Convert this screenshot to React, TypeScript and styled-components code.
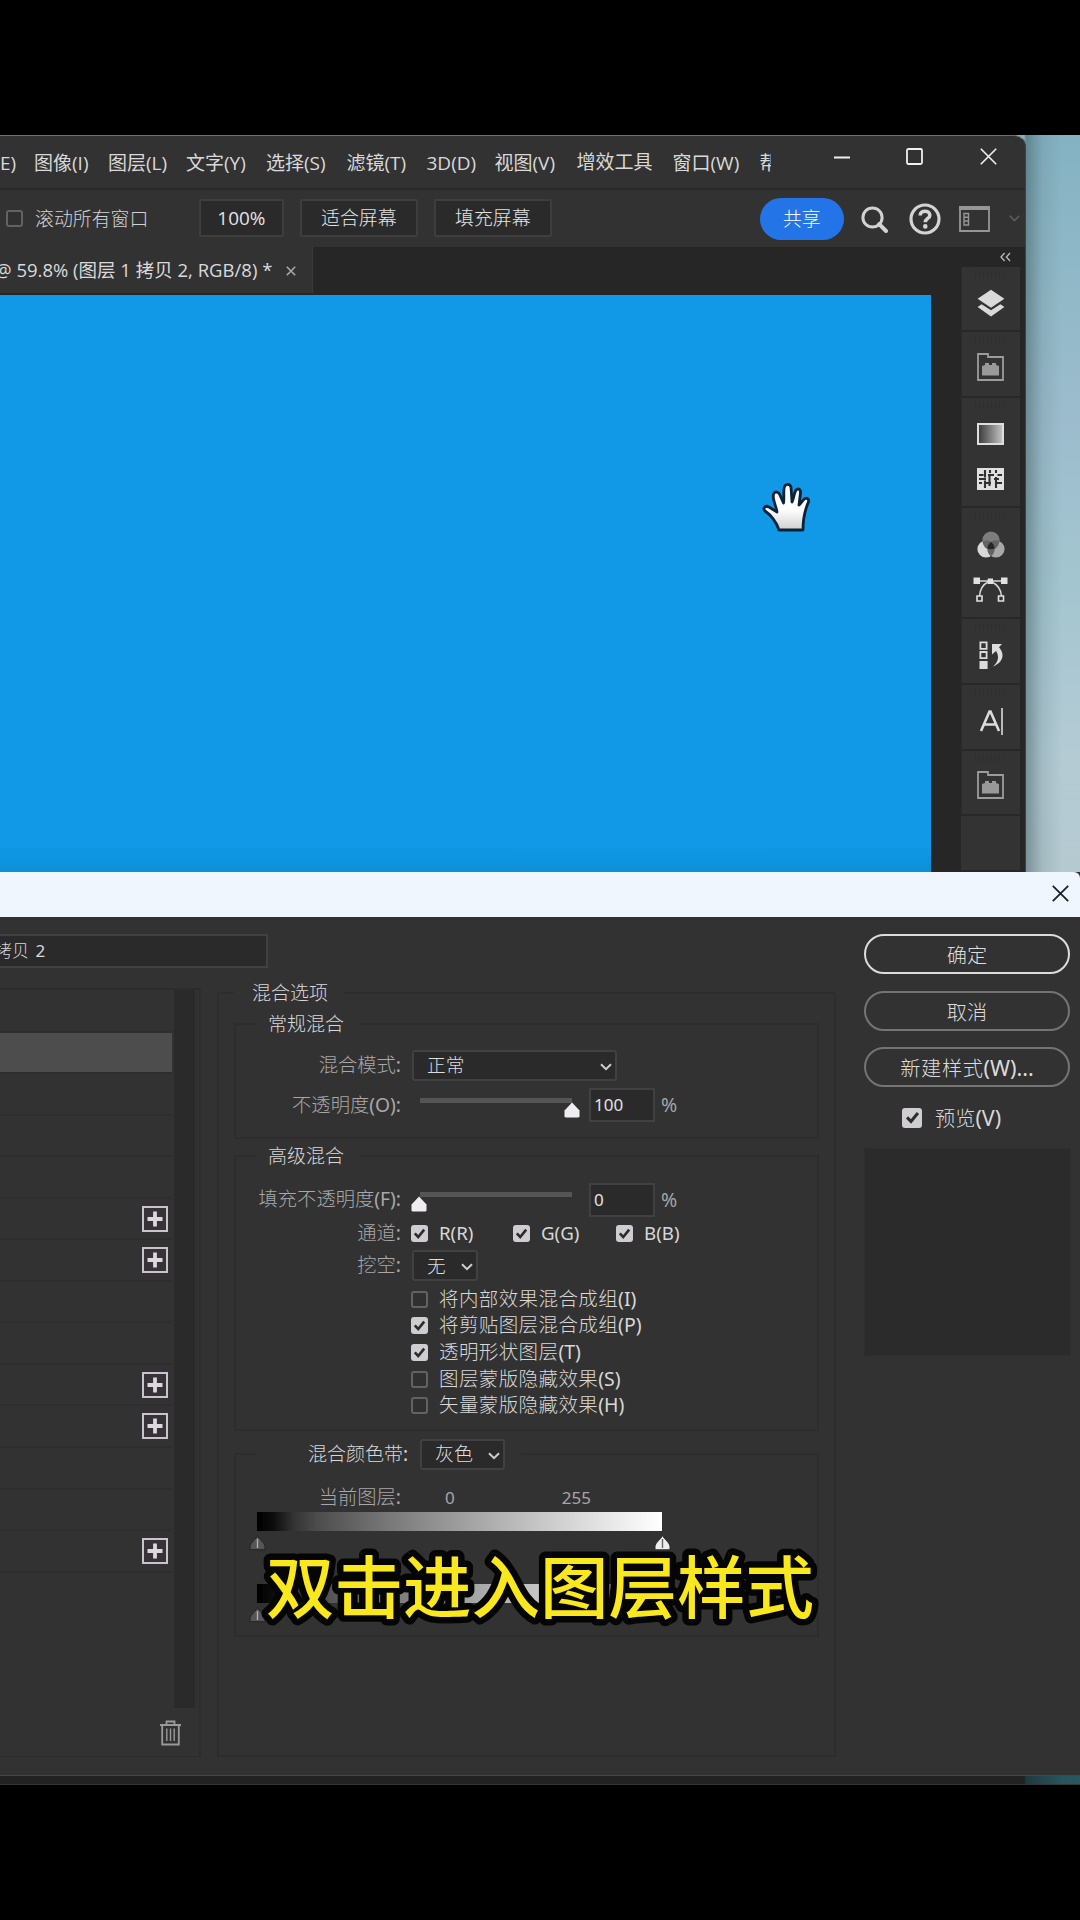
import React from "react";
import styled, { createGlobalStyle } from "styled-components";

const Global = createGlobalStyle`
  * { box-sizing: border-box; }
  html, body { margin: 0; padding: 0; background: #000; }
  body { width: 1080px; height: 1920px; overflow: hidden; }
  button, input { font: inherit; }
`;

const UI = `"Open Sans", "Noto Sans CJK SC", sans-serif`;
const FORM = `"Noto Sans", "Noto Sans CJK SC", sans-serif`;

const Screen = styled.main`
  position: relative;
  display: flex;
  flex-direction: column;
  width: 1080px;
  height: 1920px;
  padding: 135px 0;
  background: #000;
  overflow: hidden;
`;

/* ---------- application window ---------- */

const Desktop = styled.section`
  display: flex;
  height: 737px;
  flex: none;
  background:
    linear-gradient(90deg, transparent 1024px, rgba(62, 88, 94, 0.5) 1026px, rgba(90, 120, 128, 0.2) 1042px, transparent 1062px),
    linear-gradient(180deg, #84b2c2 0%, #92b9c8 22%, #9cbccd 38%, #a3c5cf 60%, #b4cbd4 85%, #b5c9d0 100%);
`;

const AppWindow = styled.div`
  display: flex;
  flex-direction: column;
  width: 1026px;
  border-top: 1px solid #6e6e6e;
  border-right: 1px solid #3f4344;
  border-radius: 0 12px 0 0;
  background: #323232;
  overflow: hidden;
`;

const MenuBar = styled.nav`
  display: flex;
  align-items: center;
  height: 54px;
  flex: none;
  border-bottom: 2px solid #292929;
  font: 400 19px/28px ${UI};
  color: #d9d9d9;
  white-space: nowrap;
`;

const MenuItem = styled.span<{ $w: number; $up?: boolean }>`
  width: ${(p) => p.$w}px;
  flex: none;
  padding: ${(p) => (p.$up ? "0 0 1px" : "2px 0 0")};
`;

const ClippedItem = styled(MenuItem)`
  overflow: hidden;
`;

const WindowButtons = styled.div`
  display: flex;
  align-items: center;
  gap: 56.5px;
  margin: 0 0 11px 63px;
`;

const OptionsBar = styled.div`
  display: flex;
  align-items: center;
  height: 57px;
  flex: none;
  margin-right: 5px;
  padding-left: 6px;
  font: 300 18.9px/26px ${UI};
  color: #d2d2d2;
  white-space: nowrap;
`;

const ToolButton = styled.button<{ $w: number; $ml: number }>`
  width: ${(p) => p.$w}px;
  height: 38px;
  margin: -1px 0 0 ${(p) => p.$ml}px;
  padding: 0;
  border: 2px solid #3e3e3e;
  border-radius: 2px;
  background: #2a2a2a;
  color: #e4e4e4;
  white-space: nowrap;
`;

const ShareButton = styled.button`
  width: 84px;
  height: 42px;
  margin: 0 17px 0 208px;
  padding: 0;
  border: 0;
  border-radius: 21px;
  background: #2375e7;
  color: #fff;
`;

const IconSlot = styled.span<{ $ml?: number; $mt?: number }>`
  display: flex;
  flex: none;
  margin-left: ${(p) => p.$ml ?? 0}px;
  margin-top: ${(p) => p.$mt ?? 0}px;
`;

const Workspace = styled.div`
  display: flex;
  flex: 1;
  min-height: 0;
  background: #262626;
`;

const DocumentArea = styled.div`
  display: flex;
  flex-direction: column;
  width: 961px;
`;

const DocumentTab = styled.div`
  display: flex;
  align-items: center;
  width: 313px;
  height: 46px;
  margin-bottom: 2px;
  flex: none;
  border-right: 1px solid #3a3a3a;
  background: #323232;
  font: 400 18.5px/26px ${UI};
  color: #dadada;
  white-space: nowrap;
`;

const TabTitle = styled.span`
  width: 281px;
  margin-left: -5px;
`;

const Canvas = styled.div`
  width: 930.5px;
  flex: 1;
  background: linear-gradient(180deg, #1199e7 0%, #1199e7 95%, #0e90d8 100%);
`;

const Dock = styled.aside`
  display: flex;
  flex-direction: column;
  width: 59px;
`;

const DockHeader = styled.div`
  display: flex;
  justify-content: flex-end;
  height: 20px;
  flex: none;
  padding: 5px 9px 0 0;
`;

const DockGroup = styled.div<{ $h: number }>`
  display: flex;
  flex-direction: column;
  align-items: center;
  height: ${(p) => p.$h}px;
  flex: none;
  padding-right: 1px;
  border-left: 1px solid #2b2b2b;
  border-bottom: 2px solid #282828;
  background: #333;
`;

const Grip = styled.i`
  width: 32px;
  height: 7px;
  margin: 4px 0 4px;
  flex: none;
  background: repeating-linear-gradient(90deg, #2f2f2f 0 1px, transparent 1px 4px);
`;

const DockIcon = styled.span<{ $h: number }>`
  display: flex;
  align-items: center;
  justify-content: center;
  width: 40px;
  height: ${(p) => p.$h}px;
`;

const DockTail = styled.div`
  flex: 1;
  margin-bottom: 2px;
  background: #333;
`;

/* ---------- layer style dialog ---------- */

const Dialog = styled.section`
  display: flex;
  flex-direction: column;
  height: 904px;
  flex: none;
  background: #323232;
  border-bottom: 1px solid #454545;
  font: 300 18.7px/24px ${FORM};
  color: #d8d8d8;
`;

const Latin = styled.span`
  font-weight: 400;
  letter-spacing: 0;
`;

const TitleBar = styled.header`
  display: flex;
  justify-content: flex-end;
  height: 45px;
  flex: none;
  padding: 13px 11px 0 0;
  border-radius: 0 6px 0 0;
  background: #eff6fd;
`;

const DialogBody = styled.div`
  display: flex;
  flex: 1;
`;

const MainColumn = styled.div`
  width: 864px;
`;

const NameField = styled.div`
  display: flex;
  align-items: center;
  width: 268px;
  height: 34px;
  margin: 17px 0 20px;
  border: 2px solid #414141;
  border-left: 0;
  background: #2a2a2a;
  font-size: 17px;
  white-space: nowrap;
  overflow: hidden;
`;

const NameText = styled.span`
  margin-left: -5px;
  word-spacing: 2px;
`;

const Panels = styled.div`
  display: flex;
`;

const StylePane = styled.div`
  display: flex;
  flex-direction: column;
  width: 201px;
  height: 769px;
  margin-right: 16px;
  border-right: 2px solid #2d2d2d;
  border-bottom: 1px solid #2d2d2d;
`;

const StyleListFrame = styled.div`
  display: flex;
  height: 720px;
  border-top: 2px solid #2c2c2c;
`;

const StyleList = styled.ul`
  width: 172px;
  margin: 0;
  padding: 1px 0 0;
  list-style: none;
`;

const StyleRow = styled.li<{ $selected?: boolean }>`
  display: flex;
  align-items: center;
  justify-content: flex-end;
  height: 41.55px;
  padding-right: 4px;
  border-bottom: 2px solid #2e2e2e;
  background: ${(p) => (p.$selected ? "#4d4d4d" : "transparent")};
`;

const ScrollTrack = styled.div`
  width: 21px;
  margin-left: 2px;
  background: #2a2a2a;
`;

const TrashRow = styled.div`
  display: flex;
  padding: 12px 0 0 160px;
`;

const Group = styled.fieldset<{ $mt?: number; $pb?: number }>`
  width: 585px;
  margin: ${(p) => p.$mt ?? 7}px 0 0;
  padding: 0 0 ${(p) => p.$pb ?? 12}px;
  border: 2px solid #2d2d2d;
`;

const OuterGroup = styled(Group)`
  width: 619px;
  height: 776px;
  margin-top: -7px;
  padding: 0 0 0 15px;
`;

const Legend = styled.legend<{ $pl: number; $ml: number; $h?: number }>`
  display: flex;
  align-items: center;
  height: ${(p) => p.$h ?? 24}px;
  margin-left: ${(p) => p.$ml}px;
  padding: 0 16px 0 ${(p) => p.$pl}px;
  font-size: 19px;
  white-space: nowrap;
`;

const Row = styled.div<{ $h: number; $mt?: number }>`
  display: flex;
  align-items: center;
  height: ${(p) => p.$h}px;
  margin-top: ${(p) => p.$mt ?? 0}px;
  white-space: nowrap;
`;

const Label = styled.span<{ $gap?: number }>`
  width: 165px;
  margin-right: ${(p) => p.$gap ?? 11}px;
  padding-bottom: 1px;
  flex: none;
  text-align: right;
  font-size: 19.3px;
  color: #a8a8a8;
`;

const SelectBox = styled.div<{ $w: number }>`
  display: flex;
  align-items: center;
  justify-content: space-between;
  width: ${(p) => p.$w}px;
  height: 31px;
  padding: 0 3px 0 13px;
  border: 2px solid #414141;
  border-radius: 3px;
  background: #2a2a2a;
  color: #dedede;
`;

const ChevronMark = styled.svg`
  margin-top: 3px;
`;

const NumberBox = styled.div`
  display: flex;
  align-items: center;
  width: 66px;
  height: 34px;
  padding-left: 3px;
  border: 2px solid #414141;
  background: #2a2a2a;
  font-size: 17px;
  font-weight: 400;
  color: #e2e2e2;
`;

const Percent = styled.span`
  margin-left: 6px;
  font-size: 19.5px;
  font-weight: 400;
  color: #a6a6a6;
`;

const Slider = styled.div`
  display: flex;
  flex-direction: column;
  width: 177px;
  padding-top: 5px;
`;

const Track = styled.div`
  width: 152px;
  height: 5px;
  margin-left: 8px;
  background: #555;
`;

const Thumb = styled.span<{ $x: number }>`
  display: flex;
  width: 16px;
  margin: -1px 0 0 ${(p) => p.$x}px;
`;

const Check = styled.label<{ $w?: number; $gap?: number }>`
  display: flex;
  align-items: center;
  gap: ${(p) => p.$gap ?? 11}px;
  width: ${(p) => (p.$w ? p.$w + "px" : "auto")};
`;

const FlagText = styled.span`
  padding-bottom: 1px;
  font-size: 19.5px;
  letter-spacing: 0.4px;
`;

const Box = styled.span<{ $on?: boolean; $size?: number }>`
  display: flex;
  align-items: center;
  justify-content: center;
  width: ${(p) => p.$size ?? 17}px;
  height: ${(p) => p.$size ?? 17}px;
  flex: none;
  border: ${(p) => (p.$on ? "0" : "2px solid #626262")};
  border-radius: 3px;
  background: ${(p) => (p.$on ? "#cfcdd1" : "#303030")};
`;

const CheckList = styled.div`
  display: flex;
  flex-direction: column;
  padding: 5px 0 0 175px;
`;

const Ramp = styled.div<{ $mt: number }>`
  width: 405px;
  height: 19px;
  margin: ${(p) => p.$mt}px 0 4px 21px;
  background: linear-gradient(90deg, #000 0%, #0c0c0c 4%, #333 9%, #4d4d4d 15%, #777 32%, #a2a2a2 52%, #cfcfcf 74%, #f6f6f6 95%, #fff 100%);
`;

const RampThumbs = styled.div`
  display: flex;
  justify-content: space-between;
  width: 422px;
  height: 16px;
  margin-left: 13px;
`;

const RangeValue = styled.span<{ $ml: number }>`
  margin-left: ${(p) => p.$ml}px;
  font-size: 17px;
  font-weight: 400;
  color: #a6a6a6;
`;

const Actions = styled.div`
  display: flex;
  flex-direction: column;
  width: 216px;
  padding-top: 17px;
`;

const PillButton = styled.button<{ $primary?: boolean; $ls?: number }>`
  width: 206px;
  height: 40px;
  margin: 0 0 16.5px;
  padding: 2px 0 0;
  border: 2px solid ${(p) => (p.$primary ? "#dcdcdc" : "#747474")};
  border-radius: 20px;
  background: transparent;
  color: #dcdcdc;
  font-size: 20.2px;
  letter-spacing: ${(p) => p.$ls ?? 0}px;
`;

const ButtonLatin = styled(Latin)`
  font-size: 21.5px;
`;

const PreviewToggle = styled.div`
  display: flex;
  margin: 2px 0 0 38px;
  font-size: 20.2px;
`;

const PreviewBox = styled.div`
  width: 207px;
  height: 208px;
  margin-top: 18px;
  border: 1px solid #2e2e2e;
  background: #2b2b2b;
`;

const BottomStrip = styled.footer`
  height: 9px;
  flex: none;
  background: linear-gradient(90deg, #222 0 1024px, #1e3a3f 1026px, #27555c 1062px, #28585f 1080px);
  border-bottom: 1px solid #363636;
`;

/* ---------- overlays ---------- */

const HandCursor = styled.svg`
  position: absolute;
  left: 762px;
  top: 482px;
`;

const Caption = styled.svg`
  position: absolute;
  left: 250px;
  top: 1531px;

  text {
    font: 500 68.5px "Noto Sans CJK SC", sans-serif;
    fill: #f9e81e;
    stroke: #050505;
    stroke-width: 13px;
    stroke-linejoin: round;
    paint-order: stroke;
  }
`;

/* Chinese runs stay light while Latin runs take the regular weight. */
const Mixed = ({ children }: { children: string }) => (
  <>
    {children.split(/([\x20-\x7e]+)/).map((run, i) => (i % 2 ? <Latin key={i}>{run}</Latin> : run))}
  </>
);

const Tick = ({ size = 13 }: { size?: number }) => (
  <svg width={size} height={size} viewBox="0 0 13 13" fill="none" stroke="#2c2c2c" strokeWidth="2.6">
    <path d="M1.8 6.4 5.2 10 11.2 2.6" />
  </svg>
);

const Chevron = () => (
  <ChevronMark width="12" height="8" viewBox="0 0 12 8" fill="none" stroke="#cfcfcf" strokeWidth="2">
    <path d="M1 1.2 6 6.2 11 1.2" />
  </ChevronMark>
);

const SliderKnob = () => (
  <svg width="16" height="16" viewBox="0 0 16 16">
    <path d="M8 0.5 15.5 8.5V14.5L14.5 15.5H1.5L0.5 14.5V8.5Z" fill="#efedf2" />
  </svg>
);

const RampKnob = ({ dark }: { dark?: boolean }) => (
  <svg width="17" height="16" viewBox="0 0 17 16">
    <path
      d="M8.5 0.5C9.8 3.6 16 8 16 11.5V14.8H1V11.5C1 8 7.2 3.6 8.5 0.5Z"
      fill={dark ? "#555" : "#eee"}
      stroke={dark ? "#222" : "#2a2a2a"}
      strokeWidth="1"
    />
    <path d="M8.5 4V13" stroke={dark ? "#b0b0b0" : "#666"} strokeWidth="1.4" />
  </svg>
);

const PlusBox = () => (
  <svg width="26" height="26" viewBox="0 0 26 26" fill="none">
    <rect x="1" y="1" width="24" height="24" stroke="#c9c4cb" strokeWidth="2" fill="#363238" />
    <path d="M13 5.5V20.500M5.500 13H20.500" stroke="#dcd8de" strokeWidth="3.8" />
  </svg>
);

const LibraryFolder = () => (
  <svg width="27" height="28" viewBox="0 0 27 28">
    <path d="M1 27V1H11V4H26V27Z" fill="none" stroke="#9c9c9c" strokeWidth="1.8" />
    <path d="M5 22.500V13L8 12V10H12V12H15V10H19V12L22 13V22.500Z" fill="#999" />
  </svg>
);

const styleRows = [false, false, false, false, false, true, true, false, false, true, true, false, false, true];

const flags: [string, boolean][] = [
  ["将内部效果混合成组(I)", false],
  ["将剪贴图层混合成组(P)", true],
  ["透明形状图层(T)", true],
  ["图层蒙版隐藏效果(S)", false],
  ["矢量蒙版隐藏效果(H)", false],
];

export default function App() {
  return (
    <Screen>
      <Global />
      <Desktop>
        <AppWindow>
          <MenuBar>
            <MenuItem $w={34}>E)</MenuItem>
            <MenuItem $w={74}>图像(I)</MenuItem>
            <MenuItem $w={78}>图层(L)</MenuItem>
            <MenuItem $w={80}>文字(Y)</MenuItem>
            <MenuItem $w={80.5}>选择(S)</MenuItem>
            <MenuItem $w={80}>滤镜(T)</MenuItem>
            <MenuItem $w={68}>3D(D)</MenuItem>
            <MenuItem $w={82}>视图(V)</MenuItem>
            <MenuItem $w={96} $up>增效工具</MenuItem>
            <MenuItem $w={87}>窗口(W)</MenuItem>
            <ClippedItem $w={11}>帮</ClippedItem>
            <WindowButtons>
              <svg width="16" height="16" viewBox="0 0 16 16">
                <path d="M0 8.5H16" stroke="#f0f0f0" strokeWidth="2" />
              </svg>
              <svg width="17" height="17" viewBox="0 0 17 17">
                <rect x="1" y="1" width="15" height="15" rx="1.5" fill="none" stroke="#f0f0f0" strokeWidth="1.8" />
              </svg>
              <svg width="17" height="17" viewBox="0 0 17 17">
                <path d="M0.8 0.8 16.2 16.2M16.2 0.8 0.8 16.2" stroke="#f0f0f0" strokeWidth="1.6" />
              </svg>
            </WindowButtons>
          </MenuBar>
          <OptionsBar>
            <Check $gap={12}>
              <Box />
              滚动所有窗口
            </Check>
            <ToolButton $w={85} $ml={50.5}><Latin>100%</Latin></ToolButton>
            <ToolButton $w={118} $ml={16}>适合屏幕</ToolButton>
            <ToolButton $w={118} $ml={16}>填充屏幕</ToolButton>
            <ShareButton>共享</ShareButton>
            <IconSlot $mt={1}>
              <svg width="27" height="27" viewBox="0 0 27 27" fill="none" stroke="#d2d2d2">
                <circle cx="11.5" cy="11.5" r="9.6" strokeWidth="3" />
                <path d="M18.2 18.2 25 25" strokeWidth="4" strokeLinecap="round" />
              </svg>
            </IconSlot>
            <IconSlot $ml={21} $mt={1}>
              <svg width="32" height="32" viewBox="0 0 32 32" fill="none" stroke="#d4d4d4">
                <circle cx="16" cy="16" r="14" strokeWidth="3.2" />
                <path d="M11.2 12.4C11.2 6.8 20.8 6.8 20.8 12.4C20.8 15.4 16.3 15.4 16.3 19.2" strokeWidth="3.6" />
                <circle cx="16.3" cy="23.4" r="1.2" strokeWidth="2.2" />
              </svg>
            </IconSlot>
            <IconSlot $ml={18} $mt={1}>
              <svg width="31" height="26" viewBox="0 0 31 26" fill="none" stroke="#969696">
                <path d="M1 1V25H30V1Z" strokeWidth="1.8" />
                <path d="M0 2H31" strokeWidth="4" />
                <path d="M5 7.5H9.5V19H5ZM5 11.3H9.5M5 15H9.5" strokeWidth="1.4" />
              </svg>
            </IconSlot>
            <IconSlot $ml={19}>
              <svg width="11" height="7" viewBox="0 0 11 7" fill="none" stroke="#5c5c5c" strokeWidth="1.6">
                <path d="M0.8 0.8 5.5 5.6 10.2 0.8" />
              </svg>
            </IconSlot>
          </OptionsBar>
          <Workspace>
            <DocumentArea>
              <DocumentTab>
                <TabTitle>@ 59.8% (图层 1 拷贝 2, RGB/8) *</TabTitle>
                <IconSlot $ml={10} $mt={1}>
                  <svg width="10" height="10" viewBox="0 0 10 10" stroke="#a8a8a8" strokeWidth="1.6">
                    <path d="M0.8 0.8 9.2 9.2M9.2 0.8 0.8 9.2" />
                  </svg>
                </IconSlot>
              </DocumentTab>
              <Canvas />
            </DocumentArea>
            <Dock>
              <DockHeader>
                <svg width="11" height="10" viewBox="0 0 11 10" fill="none" stroke="#b4b4b4" strokeWidth="1.4">
                  <path d="M4.6 1 1 5 4.6 9M10 1 6.4 5 10 9" />
                </svg>
              </DockHeader>
              <DockGroup $h={65}>
                <Grip />
                <DockIcon $h={42}>
                  <svg width="28" height="28" viewBox="0 0 28 28" fill="#dadada">
                    <path d="M14 0.8 27.4 9.8 14 18.8 0.6 9.8Z" />
                    <path d="M0.6 18 4.6 15.2 14 21.2 23.4 15.2 27.4 18 14 27.4Z" />
                  </svg>
                </DockIcon>
              </DockGroup>
              <DockGroup $h={66}>
                <Grip />
                <DockIcon $h={40}><LibraryFolder /></DockIcon>
              </DockGroup>
              <DockGroup $h={110}>
                <Grip />
                <DockIcon $h={41}>
                  <svg width="27" height="22" viewBox="0 0 27 22">
                    <defs>
                      <linearGradient id="swatch" x1="0" x2="1">
                        <stop offset="0" stopColor="#383838" />
                        <stop offset="1" stopColor="#c6c6c6" />
                      </linearGradient>
                    </defs>
                    <rect x="1" y="1" width="25" height="20" fill="url(#swatch)" stroke="#dedede" strokeWidth="2" />
                  </svg>
                </DockIcon>
                <DockIcon $h={49}>
                  <svg width="27" height="22" viewBox="0 0 27 22">
                    <rect width="27" height="22" fill="#e0e0e0" />
                    <path
                      d="M2 7H6.500M11 7H17M20.500 7H25M2 15H5M9 15H14M18.500 15H25M8 2V9.500M8 12.500V20M13 2V5M12.500 8V18M19 2V5M19 9V20M2 11H9M17 11H22"
                      stroke="#303030"
                      strokeWidth="2.100"
                      fill="none"
                    />
                  </svg>
                </DockIcon>
              </DockGroup>
              <DockGroup $h={111}>
                <Grip />
                <DockIcon $h={43}>
                  <svg width="28" height="27" viewBox="0 0 28 27">
                    <circle cx="14" cy="9" r="8.600" fill="#7d7d7d" />
                    <circle cx="9" cy="18" r="8.600" fill="#d8d8d8" />
                    <circle cx="19" cy="18" r="8.600" fill="#a8a8a8" />
                    <path d="M5.500 10.200C9 8.500 12 9.200 14 11C16 9.200 19 8.500 22.500 10.200C22 14.500 19 17.500 17.600 18C17.600 21 16.500 23.500 14 25.200C11.500 23.500 10.400 21 10.400 18C8 17 5.800 14 5.500 10.200Z" fill="#636363" />
                    <path d="M14 10.800C16 12.500 17.500 15 17.600 17.500Q14 19 10.400 17.500C10.500 15 12 12.500 14 10.800Z" fill="#262626" />
                  </svg>
                </DockIcon>
                <DockIcon $h={47}>
                  <svg width="35" height="26" viewBox="0 0 35 26">
                    <path d="M3 4H32M15 5C9 8 7 13 6.500 19M19 5C25 8 28 13 28.500 19" fill="none" stroke="#d8d8d8" strokeWidth="1.500" />
                    <path d="M0.500 0.500H7V7H0.500ZM28 0.500H34.500V7H28ZM14.700 1.500H20V7H14.700Z" fill="#e0e0e0" />
                    <path d="M4 19H9V24H4ZM25.500 19H30.500V24H25.500Z" fill="#333" stroke="#e0e0e0" strokeWidth="1.600" />
                  </svg>
                </DockIcon>
              </DockGroup>
              <DockGroup $h={66}>
                <Grip />
                <DockIcon $h={43}>
                  <svg width="24" height="29" viewBox="0 0 24 29">
                    <path d="M1.400 1.400H7.600V7.800H1.400ZM1.400 11H7.600V17.200H1.400Z" fill="none" stroke="#dcdcdc" strokeWidth="1.800" />
                    <path d="M0.500 20H8.600V28H0.500Z" fill="#dcdcdc" />
                    <path d="M13 3H23L20 6.200C26 12.500 24.500 21.500 14 25.500C19.500 20.500 20.500 15.500 17 10L13 13.500Z" fill="#dcdcdc" />
                  </svg>
                </DockIcon>
              </DockGroup>
              <DockGroup $h={66}>
                <Grip />
                <DockIcon $h={42}>
                  <svg width="26" height="29" viewBox="0 0 26 29" fill="none" stroke="#dcdcdc">
                    <path d="M3 24 11.500 4.500H12.500L21 24M6 17.500H18" strokeWidth="2.600" />
                    <path d="M24 1V28" strokeWidth="1.600" />
                  </svg>
                </DockIcon>
              </DockGroup>
              <DockGroup $h={65}>
                <Grip />
                <DockIcon $h={37}><LibraryFolder /></DockIcon>
              </DockGroup>
              <DockTail />
            </Dock>
          </Workspace>
        </AppWindow>
      </Desktop>

      <Dialog>
        <TitleBar>
          <svg width="17" height="17" viewBox="0 0 17 17" stroke="#1c2126" strokeWidth="1.8">
            <path d="M0.8 0.8 16.2 16.2M16.2 0.8 0.8 16.2" />
          </svg>
        </TitleBar>
        <DialogBody>
          <MainColumn>
            <NameField>
              <NameText><Mixed>拷贝 2</Mixed></NameText>
            </NameField>
            <Panels>
              <StylePane>
                <StyleListFrame>
                  <StyleList>
                    {styleRows.map((plus, i) => (
                      <StyleRow key={i} $selected={i === 1}>
                        {plus && <PlusBox />}
                      </StyleRow>
                    ))}
                  </StyleList>
                  <ScrollTrack />
                </StyleListFrame>
                <TrashRow>
                  <svg width="21" height="26" viewBox="0 0 21 26" fill="none" stroke="#9a9a9a">
                    <path d="M0 5H21M6.500 5V1.500H14.500V5" strokeWidth="1.800" />
                    <path d="M2.200 5V24.500H18.800V5" strokeWidth="1.800" />
                    <path d="M6.800 8.500V21M10.500 8.500V21M14.200 8.500V21" strokeWidth="1.400" />
                  </svg>
                </TrashRow>
              </StylePane>

              <OuterGroup>
                <Legend $ml={0} $pl={18}>混合选项</Legend>
                <Group $pb={15}>
                  <Legend $ml={20} $pl={12}>常规混合</Legend>
                  <Row $h={30} $mt={14}>
                    <Label><Mixed>混合模式:</Mixed></Label>
                    <SelectBox $w={205}>正常<Chevron /></SelectBox>
                  </Row>
                  <Row $h={34} $mt={8}>
                    <Label><Mixed>不透明度(O):</Mixed></Label>
                    <Slider>
                      <Track />
                      <Thumb $x={152}><SliderKnob /></Thumb>
                    </Slider>
                    <NumberBox>100</NumberBox>
                    <Percent>%</Percent>
                  </Row>
                </Group>

                <Group $mt={5} $pb={10}>
                  <Legend $ml={20} $pl={12}>高级混合</Legend>
                  <Row $h={33} $mt={15}>
                    <Label><Mixed>填充不透明度(F):</Mixed></Label>
                    <Slider>
                      <Track />
                      <Thumb $x={-1}><SliderKnob /></Thumb>
                    </Slider>
                    <NumberBox>0</NumberBox>
                    <Percent>%</Percent>
                  </Row>
                  <Row $h={34}>
                    <Label $gap={10}><Mixed>通道:</Mixed></Label>
                    <Check $w={102}><Box $on><Tick /></Box><Latin>R(R)</Latin></Check>
                    <Check $w={103}><Box $on><Tick /></Box><Latin>G(G)</Latin></Check>
                    <Check><Box $on><Tick /></Box><Latin>B(B)</Latin></Check>
                  </Row>
                  <Row $h={31}>
                    <Label><Mixed>挖空:</Mixed></Label>
                    <SelectBox $w={66}>无<Chevron /></SelectBox>
                  </Row>
                  <CheckList>
                    {flags.map(([text, on]) => (
                      <Row key={text} $h={26.6}>
                        <Check>
                          <Box $on={on}>{on && <Tick />}</Box>
                          <FlagText><Mixed>{text}</Mixed></FlagText>
                        </Check>
                      </Row>
                    ))}
                  </CheckList>
                </Group>

                <Group $pb={12}>
                  <Legend $ml={20} $pl={52} $h={33}>
                    <Check $gap={12}>
                      <span><Mixed>混合颜色带:</Mixed></span>
                      <SelectBox $w={85}>灰色<Chevron /></SelectBox>
                    </Check>
                  </Legend>
                  <Row $h={24} $mt={15}>
                    <Label><Mixed>当前图层:</Mixed></Label>
                    <RangeValue $ml={33}>0</RangeValue>
                    <RangeValue $ml={107}>255</RangeValue>
                  </Row>
                  <Ramp $mt={2} />
                  <RampThumbs><RampKnob dark /><RampKnob /></RampThumbs>
                  <Ramp $mt={33} />
                  <RampThumbs><RampKnob dark /><RampKnob /></RampThumbs>
                </Group>
              </OuterGroup>
            </Panels>
          </MainColumn>

          <Actions>
            <PillButton $primary>确定</PillButton>
            <PillButton>取消</PillButton>
            <PillButton $ls={0.6}>新建样式<ButtonLatin>(W)...</ButtonLatin></PillButton>
            <PreviewToggle>
              <Check $gap={13}><Box $on $size={20}><Tick size={15} /></Box><span>预览<ButtonLatin>(V)</ButtonLatin></span></Check>
            </PreviewToggle>
            <PreviewBox />
          </Actions>
        </DialogBody>
      </Dialog>
      <BottomStrip />

      <HandCursor width="48" height="52" viewBox="0 0 48 52">
        <defs>
          <linearGradient id="hand" x1="0" y1="0" x2="0" y2="1">
            <stop offset="0.55" stopColor="#fff" />
            <stop offset="1" stopColor="#cfcfcf" />
          </linearGradient>
        </defs>
        <path
          d="M17 48C15 41 9 33 3 29C0 26 4 23 7 25L15 30C14.500 25 10 17 11.500 12C13 8.500 17 10 18 13L21.500 21C22.500 15 21 8 22.500 4.500C24 1.500 28 1.500 29 5L30 20C32 16 32 11 34 8C36.500 5.500 39 8 38.500 11L37 23C39 22 40.500 18 43 16.500C46 15.500 47.500 18 46 21C43.500 27 41 36 41 48Z"
          fill="url(#hand)"
          stroke="#0b2238"
          strokeWidth="2.800"
          strokeLinejoin="round"
        />
      </HandCursor>
      <Caption width="580" height="110" viewBox="0 0 580 110">
        <text x="16" y="82">双击进入图层样式</text>
      </Caption>
    </Screen>
  );
}
